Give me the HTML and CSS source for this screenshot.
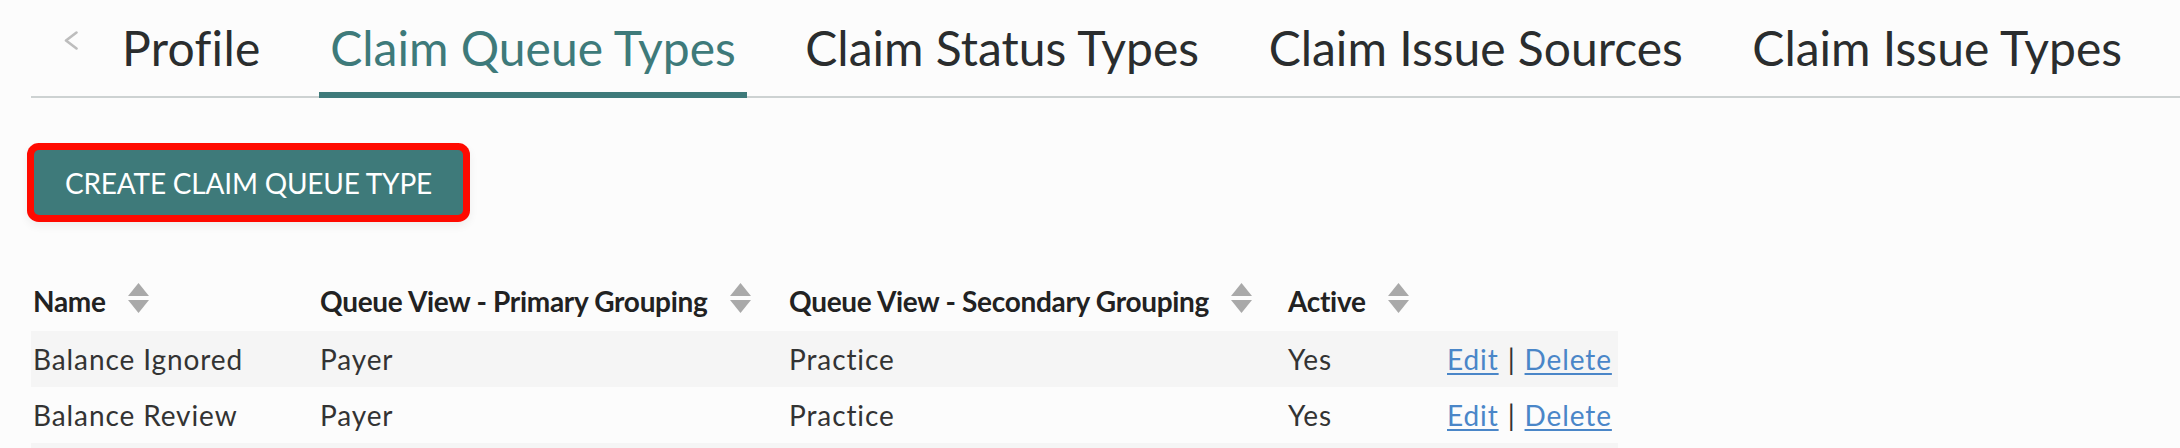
FILE: index.html
```html
<!DOCTYPE html>
<html lang="en">
<head>
<meta charset="utf-8">
<title>Claim Queue Types</title>
<link rel="stylesheet" href="styles.css">
</head>
<body>
<div class="page">
  <nav class="tabs">
    <div class="chev">
      <svg width="14" height="20" viewBox="0 0 14 20" aria-hidden="true">
        <polyline points="12.5,1.5 2,9.5 12.5,17.5" fill="none" stroke="#bdbdbd" stroke-width="2.6" stroke-linecap="round" stroke-linejoin="round"/>
      </svg>
    </div>
    <a class="tab first">Profile</a>
    <a class="tab active">Claim Queue Types</a>
    <a class="tab">Claim Status Types</a>
    <a class="tab">Claim Issue Sources</a>
    <a class="tab">Claim Issue Types</a>
  </nav>

  <div class="actions">
    <button class="btn-create">CREATE CLAIM QUEUE TYPE</button>
  </div>

  <table class="grid">
    <colgroup>
      <col class="c1"><col class="c2"><col class="c3"><col class="c4"><col class="c5">
    </colgroup>
    <thead>
      <tr>
        <th><span class="th-label">Name</span><svg class="sort" width="21" height="30" viewBox="0 0 21 30" aria-hidden="true"><polygon points="10.5,0 21,13 0,13" fill="#a9a9a9"/><polygon points="0,17 21,17 10.5,30" fill="#a9a9a9"/></svg></th>
        <th><span class="th-label">Queue View - Primary Grouping</span><svg class="sort" width="21" height="30" viewBox="0 0 21 30" aria-hidden="true"><polygon points="10.5,0 21,13 0,13" fill="#a9a9a9"/><polygon points="0,17 21,17 10.5,30" fill="#a9a9a9"/></svg></th>
        <th><span class="th-label">Queue View - Secondary Grouping</span><svg class="sort" width="21" height="30" viewBox="0 0 21 30" aria-hidden="true"><polygon points="10.5,0 21,13 0,13" fill="#a9a9a9"/><polygon points="0,17 21,17 10.5,30" fill="#a9a9a9"/></svg></th>
        <th><span class="th-label">Active</span><svg class="sort" width="21" height="30" viewBox="0 0 21 30" aria-hidden="true"><polygon points="10.5,0 21,13 0,13" fill="#a9a9a9"/><polygon points="0,17 21,17 10.5,30" fill="#a9a9a9"/></svg></th>
        <th></th>
      </tr>
    </thead>
    <tbody>
      <tr class="odd">
        <td>Balance Ignored</td>
        <td>Payer</td>
        <td>Practice</td>
        <td>Yes</td>
        <td><a class="lnk" href="#">Edit</a><span class="sep">|</span><a class="lnk" href="#">Delete</a></td>
      </tr>
      <tr>
        <td>Balance Review</td>
        <td>Payer</td>
        <td>Practice</td>
        <td>Yes</td>
        <td><a class="lnk" href="#">Edit</a><span class="sep">|</span><a class="lnk" href="#">Delete</a></td>
      </tr>
      <tr class="odd">
        <td></td><td></td><td></td><td></td><td></td>
      </tr>
    </tbody>
  </table>
</div>
</body>
</html>
```

FILE: styles.css
```css
html, body {
  margin: 0;
  padding: 0;
  background: #fcfcfc;
}

body {
  font-family: Lato, "Open Sans", "Liberation Sans", sans-serif;
  color: #333;
}

.page {
  padding-left: 31px;
  height: 448px;
  overflow: hidden;
  box-sizing: border-box;
}

/* Tabs */
.tabs {
  display: flex;
  align-items: flex-end;
  padding-top: 19px;
  border-bottom: 2px solid #cdd2d2;
  gap: 47.5px;
}

.chev {
  align-self: flex-start;
  width: 33px;
  padding-left: 33px;
  margin-right: -47.5px;
  padding-top: 12px;
  height: 20px;
}

.chev svg {
  display: block;
}

.tabs .chev + .tab {
  margin-left: 14px;
}

.tab {
  display: block;
  font-size: 48px;
  line-height: 58px;
  color: #2a2d2e;
  padding: 0 11px 15px;
  border-bottom: 6px solid transparent;
  margin-bottom: -2px;
  white-space: nowrap;
  cursor: pointer;
}

.tab.first {
  letter-spacing: 0.3px;
}

.tab.active {
  color: #3e7a7a;
  border-bottom-color: #3e7a7a;
}

/* Button */
.actions {
  padding-top: 52px;
  padding-left: 3px;
}

.btn-create {
  display: block;
  height: 65px;
  padding: 0 31px;
  border: none;
  border-radius: 5px;
  background: #3e7a7a;
  color: #fff;
  font-family: Lato, "Open Sans", "Liberation Sans", sans-serif;
  font-size: 28px;
  letter-spacing: -0.2px;
  box-shadow: 0 0 0 7px #ff0a00, 0 4px 10px 7px rgba(0, 0, 0, 0.06);
}

/* Table */
.grid {
  margin-top: 60px;
  border-collapse: collapse;
  table-layout: fixed;
  width: 1587px;
  font-size: 28px;
}

.c1 { width: 287px; }
.c2 { width: 469px; }
.c3 { width: 499px; }
.c4 { width: 159px; }
.c5 { width: 173px; }

.grid th,
.grid td {
  height: 56px;
  padding: 0 0 0 2px;
  text-align: left;
  vertical-align: middle;
  line-height: 34px;
  white-space: nowrap;
  box-sizing: border-box;
}

.grid th {
  font-weight: 700;
  color: #222;
  letter-spacing: -0.3px;
  padding-bottom: 8px;
}

.th-label {
  vertical-align: middle;
}

.sort {
  vertical-align: middle;
  margin-left: 22px;
  position: relative;
  top: -3px;
}

.grid td {
  color: #333;
  letter-spacing: 0.9px;
}

.grid tr.odd td {
  background: #f5f5f5;
}

.lnk {
  color: #4a86c8;
  text-decoration: underline;
  text-decoration-thickness: 2px;
  text-underline-offset: 3px;
}

.sep {
  color: #333;
  margin: 0 9px;
}
```
